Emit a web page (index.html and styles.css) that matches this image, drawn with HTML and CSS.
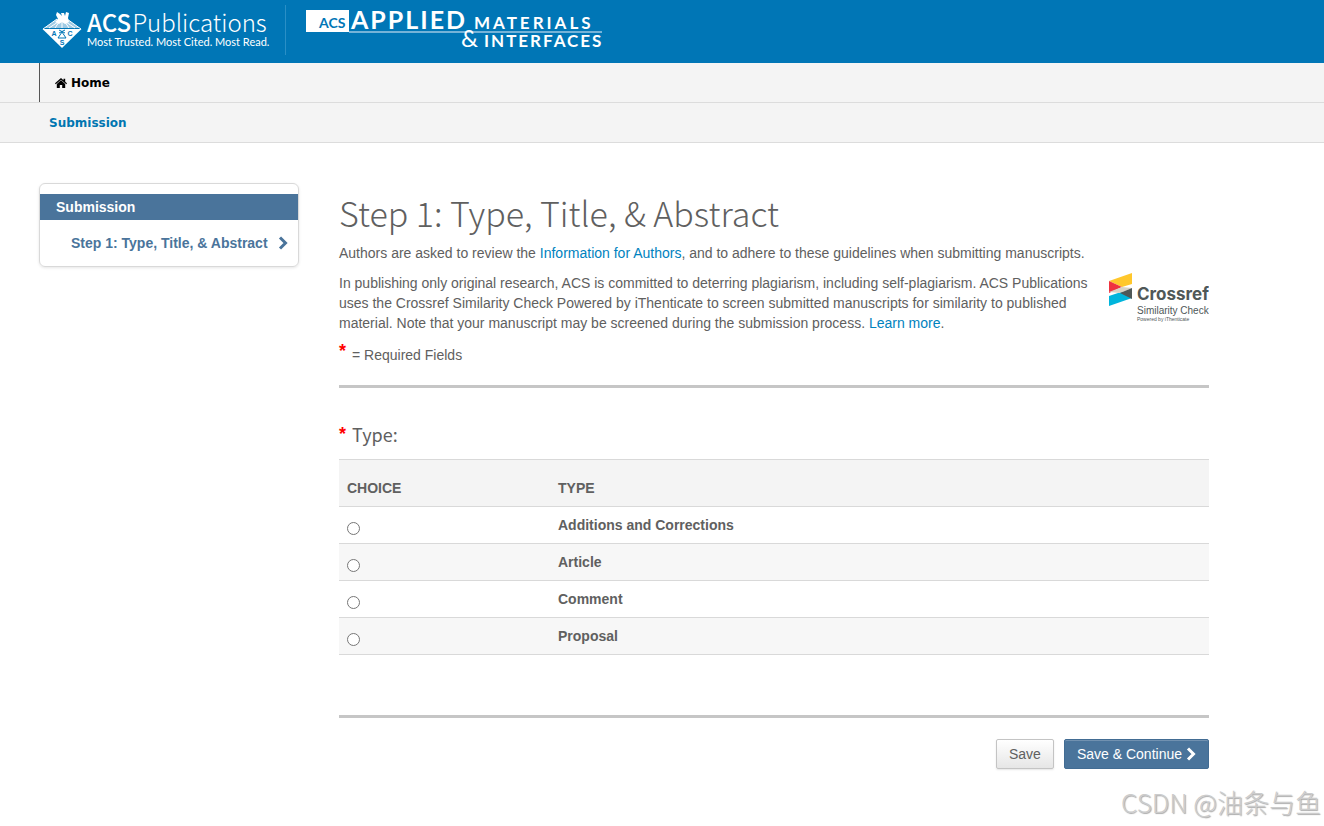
FILE: index.html
```html
<!DOCTYPE html>
<html lang="en">
<head>
    <meta charset="UTF-8">
    <meta name="viewport" content="width=device-width, initial-scale=1.0">
    <title>Submission - Step 1</title>
    <link rel="stylesheet" href="styles.css">
</head>
<body>
    <header class="site-header">
        <a class="publisher" href="#">
            <svg class="publisher-mark" viewBox="0 0 40 38" aria-hidden="true">
                <path fill="#9fcbe4" d="M15 9 H25 L37.500 18 H2.500 Z"/>
                <path fill="#fff" d="M.5 19 H39.500 L20 38 Z"/>
                <path fill="none" stroke="#fff" stroke-width="1" d="M1 19 15 9 M39 19 25 9 M7 18l9-6 M13 18l4-6 M20 18v-6 M27 18l-4-6 M33 18l-9-6"/>
                <path fill="#fff" d="M13 12 L16 9 L14 5 L15 2 L18 4 L20 6 L19 3 L22 3 L23 6 L24 2 L27 3 L26 8 L27 12 L23 14 L20 12 L17 14 Z"/>
                <path fill="none" stroke="#0076b6" stroke-width="1" d="M17 20l6 3 M23 20l-6 3 M20 22l-4 6h8z"/>
                <g fill="#0076b6" font-family="Liberation Sans" font-size="7" font-weight="bold" text-anchor="middle">
                    <text x="12" y="26">A</text>
                    <text x="28" y="26">C</text>
                    <text x="20" y="35">S</text>
                </g>
            </svg>
            <span class="publisher-text">
                <span class="publisher-name"><b>ACS</b> Publications</span>
                <span class="publisher-tagline">Most Trusted. Most Cited. Most Read.</span>
            </span>
        </a>
        <a class="journal" href="#">
            <svg class="journal-logo" viewBox="0 0 300 56" fill="#fff" font-family="Lato, sans-serif" font-weight="bold">
                <path d="M1 10h43v22H1z"/>
                <path fill="#75b3d8" d="M44 31h253v2H44z"/>
                <text class="journal-acs" x="14" y="28">ACS</text>
                <text class="journal-large" x="46" y="29">APPLIED</text>
                <text class="journal-small materials" x="169" y="29">MATERIALS</text>
                <text class="journal-amp" x="156" y="47">&amp;</text>
                <text class="journal-small" x="179" y="47">INTERFACES</text>
            </svg>
        </a>
    </header>

    <nav class="nav-bar">
        <a class="nav-home" href="#">
            <svg class="home-icon" viewBox="0 0 12 10" aria-hidden="true">
                <path d="M6 0 L8.500 2.200 V.8h1.700v2.900L12 5.300l-.7.900L6 1.700.7 6.200 0 5.300z M6 2.300l4.200 3.600V10H7.200V7H4.800v3H1.800V5.900z"/>
            </svg>
            Home
        </a>
    </nav>
    <nav class="nav-bar">
        <a class="nav-submission" href="#">Submission</a>
    </nav>

    <div class="page">
        <aside class="steps">
            <div class="steps-title">Submission</div>
            <a class="steps-item" href="#">
                Step 1: Type, Title, &amp; Abstract
                <svg class="chevron" viewBox="0 0 10 14" aria-hidden="true"><path d="M2 1.500 7.500 7 2 12.500"/></svg>
            </a>
        </aside>

        <main class="content">
            <h1>Step 1: Type, Title, &amp; Abstract</h1>
            <p>Authors are asked to review the <a href="#">Information for Authors</a>, and to adhere to these guidelines when submitting manuscripts.</p>
            <div class="notice">
                <p>In publishing only original research, ACS is committed to deterring plagiarism, including self-plagiarism. ACS Publications uses the Crossref Similarity Check Powered by iThenticate to screen submitted manuscripts for similarity to published material. Note that your manuscript may be screened during the submission process. <a href="#">Learn more</a>.</p>
                <svg class="crossref" viewBox="0 0 101 50" font-family="Liberation Sans, Arial, sans-serif">
                    <path fill="#ffc72c" d="M1 8 24 0v11L14 14 1 8z"/>
                    <path fill="#ef3340" d="M1 8 14 14 1 20z"/>
                    <path fill="#00b5dc" d="M1 23 13 19 24 25 1 33z"/>
                    <path fill="#d8d2c4" d="M1 19 14 14 24 15 12 20z"/>
                    <path fill="#4f5858" d="M24 15v11L12 20z"/>
                    <text class="crossref-name" x="29" y="27">Crossref</text>
                    <text class="crossref-check" x="29" y="41">Similarity Check</text>
                    <text class="crossref-by" x="29" y="48">Powered by iThenticate</text>
                </svg>
            </div>
            <div class="required-note"><span class="star">*</span> = Required Fields</div>
            <hr>

            <form>
                <h2><span class="star">*</span> Type:</h2>
                <table class="type-table">
                    <thead>
                        <tr><th class="choice">Choice</th><th>Type</th></tr>
                    </thead>
                    <tbody>
                        <tr>
                            <td><input type="radio" name="type" id="type-additions"></td>
                            <td><label for="type-additions">Additions and Corrections</label></td>
                        </tr>
                        <tr>
                            <td><input type="radio" name="type" id="type-article"></td>
                            <td><label for="type-article">Article</label></td>
                        </tr>
                        <tr>
                            <td><input type="radio" name="type" id="type-comment"></td>
                            <td><label for="type-comment">Comment</label></td>
                        </tr>
                        <tr>
                            <td><input type="radio" name="type" id="type-proposal"></td>
                            <td><label for="type-proposal">Proposal</label></td>
                        </tr>
                    </tbody>
                </table>
                <hr>
                <div class="actions">
                    <button type="button" class="btn">Save</button>
                    <button type="button" class="btn btn-primary">Save &amp; Continue
                        <svg class="chevron" viewBox="0 0 10 14" aria-hidden="true"><path d="M2 1.500 7.500 7 2 12.500"/></svg>
                    </button>
                </div>
            </form>
        </main>
    </div>
    <div class="watermark">CSDN @油条与鱼</div>
</body>
</html>
```

FILE: styles.css
```css
* {
    box-sizing: border-box;
}

body {
    position: relative;
    min-height: 100vh;
    margin: 0;
    background: #fff;
    color: #606060;
    font-family: "Liberation Sans", Arial, sans-serif;
    font-size: 14px;
    line-height: 20px;
}

a {
    color: #0082be;
    text-decoration: none;
}

/* Header */
.site-header {
    display: flex;
    align-items: flex-start;
    height: 63px;
    padding: 0 40px;
    background: #0076b6;
}

.publisher {
    display: flex;
    gap: 5px;
    height: 50px;
    margin-top: 5px;
    padding: 5px 16px 0 2px;
    border-right: 1px solid #2a8fc6;
    color: #fff;
}

.publisher-mark {
    width: 40px;
    height: 38px;
}

.publisher-text {
    display: flex;
    flex-direction: column;
    white-space: nowrap;
}

.publisher-name {
    font-family: "Noto Sans CJK SC", sans-serif;
    font-size: 24px;
    font-weight: 300;
    line-height: 24px;
}

.publisher-name b {
    font-weight: 500;
    margin-right: -4px;
}

.publisher-tagline {
    font-family: Lato, sans-serif;
    font-size: 11px;
    line-height: 16px;
}

.journal {
    padding-left: 19px;
}

.journal-logo {
    display: block;
    width: 300px;
    height: 56px;
}

.journal-acs {
    fill: #0076b6;
    font-size: 14px;
}

.journal-large {
    font-size: 25px;
    letter-spacing: 2px;
}

.journal-small {
    font-size: 17px;
    letter-spacing: 2px;
}

.materials {
    letter-spacing: 3px;
}

.journal-amp {
    font-size: 24px;
    font-weight: normal;
}

/* Navigation */
.nav-bar {
    display: flex;
    height: 40px;
    padding-left: 39px;
    background: #f4f4f4;
    border-bottom: 1px solid #dcdcdc;
    font-family: "DejaVu Sans", Verdana, sans-serif;
    font-size: 12px;
    font-weight: bold;
    line-height: 40px;
}

.nav-home {
    display: flex;
    align-items: center;
    gap: 4px;
    padding-left: 15px;
    border-left: 1px solid #555;
    color: #000;
}

.home-icon {
    width: 12px;
    height: 10px;
}

.nav-submission {
    padding-left: 10px;
    color: #0076b1;
}

/* Layout */
.page {
    display: grid;
    grid-template-columns: 260px 1fr;
    gap: 40px;
    align-items: start;
    max-width: 1209px;
    padding: 40px 0 40px 39px;
}

.steps {
    padding: 10px 0;
    border: 1px solid #d9d9d9;
    border-radius: 6px;
    box-shadow: 0 1px 3px rgba(0, 0, 0, 0.1);
    font-weight: bold;
}

.steps-title {
    padding: 3px 16px;
    background: #4a749b;
    color: #fff;
}

.steps-item {
    display: flex;
    justify-content: space-between;
    align-items: center;
    padding: 13px 10px 3px 31px;
    color: #4a749b;
}

.chevron {
    width: 10px;
    height: 14px;
    fill: none;
    stroke: currentColor;
    stroke-width: 3;
}

h1 {
    margin: 10px 0;
    font-family: "Noto Sans CJK SC", sans-serif;
    font-size: 34px;
    font-weight: 300;
    line-height: 40px;
}

p {
    margin: 0 0 10px;
}

.notice {
    display: flex;
    justify-content: space-between;
    gap: 20px;
}

.crossref {
    flex: none;
    width: 101px;
    height: 50px;
}

.crossref text {
    fill: #4f5858;
}

.crossref-name {
    font-family: Inter, sans-serif;
    font-size: 17px;
    font-weight: bold;
}

.crossref-check {
    font-size: 10px;
}

.crossref-by {
    font-size: 5px;
}

.required-note,
h2 {
    display: flex;
    align-items: flex-start;
    gap: 6px;
}

.required-note {
    padding: 2px 0;
}

.star {
    color: #f00;
    font-family: "Liberation Sans", Arial, sans-serif;
    font-size: 18px;
    font-weight: bold;
    line-height: 12px;
}

hr {
    height: 3px;
    margin: 18px 0 40px;
    border: 0;
    background: #c6c6c6;
}

h2 {
    margin: 0 0 19px;
    font-family: "Noto Sans CJK SC", sans-serif;
    font-size: 18px;
    font-weight: normal;
    line-height: 12px;
}

/* Type choices */
.type-table {
    width: 100%;
    margin-bottom: 60px;
    border-collapse: collapse;
    border-top: 1px solid #d9d9d9;
}

.type-table tr {
    border-bottom: 1px solid #d9d9d9;
}

.type-table th {
    padding: 18px 8px 8px;
    background: #f4f4f4;
    text-align: left;
    text-transform: uppercase;
}

.type-table .choice {
    width: 211px;
}

.type-table td {
    height: 37px;
    padding: 8px;
    font-weight: bold;
    vertical-align: top;
}

.type-table tbody tr:nth-child(even) {
    background: #f7f7f7;
}

.type-table input {
    display: block;
    width: 13px;
    height: 13px;
    margin: 7px 0 0;
}

.actions {
    display: flex;
    justify-content: flex-end;
    gap: 10px;
}

form hr {
    margin: 0 0 21px;
}

.btn {
    display: flex;
    align-items: center;
    gap: 4px;
    height: 30px;
    padding: 0 12px;
    border: 1px solid #c4c4c4;
    border-radius: 2px;
    background: linear-gradient(#fff, #e6e6e6);
    box-shadow: 0 1px 2px rgba(0, 0, 0, 0.1);
    color: #606060;
    font-family: inherit;
    font-size: 14px;
}

.btn-primary {
    border-color: #426c93;
    background: #4a749b;
    box-shadow: inset 0 1px 0 #7191b0;
    color: #fff;
}

.watermark {
    position: absolute;
    right: 3px;
    bottom: 6px;
    color: #ccc;
    font-family: "Noto Sans CJK SC", sans-serif;
    font-size: 26px;
    font-weight: 300;
    line-height: 36px;
    text-shadow: 1px 1px 1px #aaa;
}
```
